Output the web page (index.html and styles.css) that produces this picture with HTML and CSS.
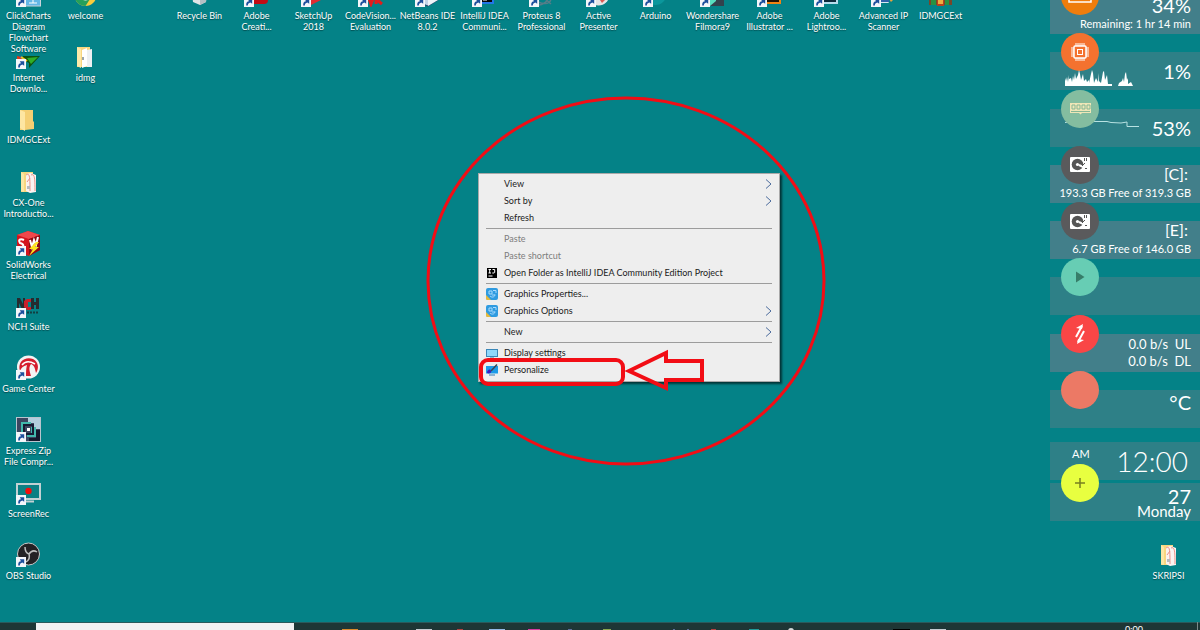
FILE: index.html
```html
<!DOCTYPE html>
<html lang="en">
<head>
    <meta charset="UTF-8">
    <title>Desktop</title>
    <link rel="stylesheet" href="styles.css">
</head>
<body>
    <svg class="defs">
        <symbol id="shortcut" viewBox="0 0 10 10">
            <rect width="10" height="10" fill="#f4f6fa"/>
            <path d="M2.2 8.6C2 5.6 3 4.3 5 4.2L3.8 2.2H8.2V6.8L6.4 5.4C4.6 5.8 3.8 6.8 3.9 8.6Z" fill="#1d4f9c"/>
        </symbol>
        <symbol id="folder" viewBox="0 0 25 25">
            <path d="M4 4H17V15L18 16V23L9 24H4Z" fill="#f5cf73"/>
            <path d="M4 4L9 6V25L4 22Z" fill="#fde6a2"/>
        </symbol>
        <symbol id="folder-docs" viewBox="0 0 25 25">
            <path d="M5 3H17V23H5Z" fill="#f8d67f"/>
            <path d="M10 5L15 4L20 6V23L14 24L10 22Z" fill="#fbf3f1"/>
            <path d="M10 6C14 3 14 9 14 22M15 6C19 4 19 11 19 22M11 13L14 9" fill="none" stroke="#ec8f87" stroke-width="1"/>
            <path d="M11 17H14V20H11Z" fill="#b9b9bd"/>
            <path d="M5 3L8 5V23L5 22Z" fill="#fbe6a5"/>
        </symbol>
        <symbol id="hdd" viewBox="0 0 20 15">
            <rect width="20" height="15" rx="1" fill="#fff"/>
            <circle cx="7.5" cy="7.5" r="5.8" fill="#555"/>
            <circle cx="7.5" cy="7.5" r="1.6" fill="#fff"/>
            <path d="M9 8L13 10L17 4" fill="none" stroke="#fff" stroke-width="2"/>
            <path d="M14.5 1V4M16.5 1V4M15 11.500H17" fill="none" stroke="#555"/>
            <path d="M12 9L15 6" stroke="#555"/>
        </symbol>
        <symbol id="graphics" viewBox="0 0 12 12">
            <rect width="12" height="12" rx="2" fill="#2f9be0"/>
            <path d="M0 7L5 12H1.500Q0 12 0 10.500Z" fill="#e5b93c"/>
            <path d="M3 3H6V6H3ZM7 2.500H10V5M4 8C6 10 9 9 9 6.500M6 7H9" fill="none" stroke="#a9dcff"/>
        </symbol>
        <symbol id="chevron" viewBox="0 0 7 10">
            <path d="M1 0.500L6 5L1 9.500" fill="none" stroke="#4a6a9c"/>
        </symbol>
    </svg>

    <main class="desktop">
        <ul class="icons">
            <!-- left column -->
            <li class="c1 r1"><svg class="icon" viewBox="0 0 25 25"><rect x="4" y="2" width="20.500" height="22" fill="#63b7e6" stroke="#c9d3dc"/><path d="M13 21H21M17 16V21M13 17H21" stroke="#fff" fill="none"/><use href="#shortcut" y="15" width="10" height="10"/></svg>ClickCharts Diagram Flowchart Software</li>
            <li class="c1 r2"><svg class="icon" viewBox="0 0 25 25"><path d="M1 12L11 14L8 20H1Z" fill="#d93a1c"/><path d="M3 12L12 15L9 19Z" fill="#3c4fc4"/><path d="M7 12L24 12L13 24L13 19L7 16Z" fill="#0d520f"/><path d="M11 14L22 13L15 20Z" fill="#2fae27"/><path d="M5 13L11 17" stroke="#f0c419" stroke-width="2"/><use href="#shortcut" y="15" width="10" height="10"/></svg>Internet Downlo...</li>
            <li class="c1 r3"><svg class="icon"><use href="#folder"/></svg>IDMGCExt</li>
            <li class="c1 r4"><svg class="icon"><use href="#folder-docs"/></svg>CX-One Introductio...</li>
            <li class="c1 r5"><svg class="icon" viewBox="0 0 25 25"><path d="M1 4L12 0L24 4V19L13 25L1 21Z" fill="#d3141d"/><path d="M1 4L12 0L24 4L13 8Z" fill="#f0484b"/><path d="M13 8L24 4V19L13 25Z" fill="#8f0a12"/><path d="M8 9C4 7 2 9 4 12C8 13 9 16 4 16" fill="none" stroke="#fff" stroke-width="2"/><path d="M14 9L16 16L18 9L20 14L22 6" fill="none" stroke="#fff" stroke-width="2"/><path d="M20 11L13 18H17L13 25L23 16H19L23 11Z" fill="#ffe51f"/><use href="#shortcut" y="15" width="10" height="10"/></svg>SolidWorks Electrical</li>
            <li class="c1 r6"><svg class="icon" viewBox="0 0 25 25"><path d="M1 16V5H4L7 11V5H9V16H6L3 10V16Z" fill="#262b2f"/><path d="M15 6H11L8 8V14L11 17H15V14H12V9H15Z" fill="#c9202b"/><path d="M15 5H18V9H20V5H23V16H20V12H18V16H15Z" fill="#262b2f"/><path d="M11 19.500H23" stroke="#123f42" stroke-width="2" stroke-dasharray="2 1"/><use href="#shortcut" y="15" width="10" height="10"/></svg>NCH Suite</li>
            <li class="c1 r7"><svg class="icon" viewBox="0 0 25 25"><circle cx="12.500" cy="12" r="11.500" fill="#f3f3f3"/><path d="M4 16C1 7 9 1 17 4C23 7 23 14 20 18C19 13 18 10 15 9C12 13 14 17 15 21L10 21C10 17 10 14 11 10C7 11 5 13 4 16Z" fill="#d51c2c"/><path d="M6 10C9 6 14 6 19 9" fill="none" stroke="#fff" stroke-width="1.500"/><use href="#shortcut" y="15" width="10" height="10"/></svg>Game Center</li>
            <li class="c1 r8"><svg class="icon" viewBox="0 0 25 25"><rect x="0.500" y="0.500" width="24" height="24" fill="#3c4660" stroke="#b8c4ce"/><path d="M12 1H24V12H18V6H12Z" fill="#b2cede"/><path d="M5 5H15V9H9V15H5Z" fill="#42b8ac"/><path d="M15 10H20V20H11V16H15Z" fill="#42b8ac"/><path d="M20 13H24V24H13V21H20Z" fill="#15182c"/><path d="M8 8H17V17H8Z" fill="none" stroke="#171b34" stroke-width="2"/><rect x="11" y="11" width="3" height="3" fill="#fff"/><use href="#shortcut" y="15" width="10" height="10"/></svg>Express Zip File Compr...</li>
            <li class="c1 r9"><svg class="icon" viewBox="0 0 25 25"><rect x="1" y="4" width="23" height="15" fill="#0c8084" stroke="#c3d1d3" stroke-width="2"/><path d="M8 21.500H18" stroke="#c3d1d3" stroke-width="2"/><circle cx="12.500" cy="11" r="3.200" fill="#f50c0c"/><use href="#shortcut" y="15" width="10" height="10"/></svg>ScreenRec</li>
            <li class="c1 r10"><svg class="icon" viewBox="0 0 25 25"><circle cx="12.500" cy="12" r="11" fill="#232124" stroke="#c8c8c8"/><path d="M9 5C9 9 10 11 13 12C15 9 18 8 21 10M13 12C14 15 13 18 10 20" fill="none" stroke="#bdbdbd" stroke-width="1.500"/><use href="#shortcut" y="15" width="10" height="10"/></svg>OBS Studio</li>

            <li class="c2 r1"><svg class="icon" viewBox="0 0 25 25"><circle cx="12.500" cy="13" r="11" fill="#f9cc3c"/><path d="M1.500 13A11 11 0 0 0 12.500 24L17 17L8 12Z" fill="#25a05a"/><path d="M2 10A11 11 0 0 1 23 10Z" fill="#dc4437"/><circle cx="12.500" cy="13" r="5" fill="#4285f4" stroke="#fff"/></svg>welcome</li>
            <li class="c2 r2"><svg class="icon" viewBox="0 0 25 25"><path d="M4 3H17V23H4Z" fill="#f8d67f"/><path d="M9 6L14 4V22L9 24Z" fill="#fff"/><path d="M14 6L19 5V23H14Z" fill="#edf0f2"/><path d="M9 13H11V16H9Z" fill="#9aa4aa"/><path d="M4 3L8 5V24L4 22Z" fill="#fde9aa"/></svg>idmg</li>

            <!-- top row -->
            <li class="c4 r1"><svg class="icon" viewBox="0 0 25 25"><path d="M4 2H21L19 20L13 23L6 20Z" fill="#dfe4e6"/><path d="M13 8L20 6L19 20L13 23Z" fill="#b4bfc4"/></svg>Recycle Bin</li>
            <li class="c5 r1"><svg class="icon" viewBox="0 0 25 25"><rect x="2" y="1" width="22" height="21" rx="4" fill="#c20c14"/><use href="#shortcut" y="15" width="10" height="10"/></svg>Adobe<br>Creati...</li>
            <li class="c6 r1"><svg class="icon" viewBox="0 0 25 25"><path d="M3 3H22V17L10 23V10Z" fill="#df2b30"/><use href="#shortcut" y="15" width="10" height="10"/></svg>SketchUp 2018</li>
            <li class="c7 r1"><svg class="icon" viewBox="0 0 25 25"><path d="M9 12L13 22L17 12M18 22V14H22Q24 17 19 18L24 22" fill="none" stroke="#e31c1c" stroke-width="3"/><use href="#shortcut" y="15" width="10" height="10"/></svg>CodeVision... Evaluation</li>
            <li class="c8 r1"><svg class="icon" viewBox="0 0 25 25"><path d="M3 5L13 1L23 5V18L13 24L3 20Z" fill="#c3d4e7" stroke="#273c68"/><path d="M13 10L23 6V18L13 24Z" fill="#eef3f8"/><use href="#shortcut" y="15" width="10" height="10"/></svg>NetBeans IDE 8.0.2</li>
            <li class="c9 r1"><svg class="icon" viewBox="0 0 25 25"><path d="M3 2H22V22H3Z" fill="#2376e8"/><path d="M5 5H20V20H5Z" fill="#06070b"/><path d="M11 18H15" stroke="#fff"/><use href="#shortcut" y="15" width="10" height="10"/></svg>IntelliJ IDEA Communi...</li>
            <li class="c10 r1"><svg class="icon" viewBox="0 0 25 25"><path d="M8 10L22 22M21 12C24 20 19 24 9 20M9 23C15 23 20 18 23 10" fill="none" stroke="#557d88" stroke-width="1.500"/><use href="#shortcut" y="15" width="10" height="10"/></svg>Proteus 8 Professional</li>
            <li class="c11 r1"><svg class="icon" viewBox="0 0 25 25"><circle cx="12.500" cy="12.500" r="11" fill="#e5e4e5"/><path d="M12 15L20 17L16 21Z" fill="#db5952"/><use href="#shortcut" y="15" width="10" height="10"/></svg>Active Presenter</li>
            <li class="c12 r1"><svg class="icon" viewBox="0 0 25 25"><circle cx="12.500" cy="12" r="11" fill="#0b979c"/><use href="#shortcut" y="15" width="10" height="10"/></svg>Arduino</li>
            <li class="c13 r1"><svg class="icon" viewBox="0 0 25 25"><rect x="1" y="1" width="23" height="23" fill="#33424d"/><path d="M10 18L16 13V19L10 24Z" fill="#58dfc0"/><use href="#shortcut" y="15" width="10" height="10"/></svg>Wondershare Filmora9</li>
            <li class="c14 r1"><svg class="icon" viewBox="0 0 25 25"><rect x="2" y="1" width="21" height="20" fill="#251304" stroke="#f08313" stroke-width="2"/><use href="#shortcut" y="15" width="10" height="10"/></svg>Adobe Illustrator ...</li>
            <li class="c15 r1"><svg class="icon" viewBox="0 0 25 25"><rect x="2" y="1" width="21" height="20" fill="#0d2a3b" stroke="#b5dcec" stroke-width="2"/><use href="#shortcut" y="15" width="10" height="10"/></svg>Adobe Lightroo...</li>
            <li class="c16 r1"><svg class="icon" viewBox="0 0 25 25"><path d="M3 2H23V18H16L18 21H10V18H3Z" fill="#d7e6f3"/><path d="M10 17H18V20H10Z" fill="#2e62a9"/><path d="M18 17L24 16L20 20Z" fill="#e8a33d"/><use href="#shortcut" y="15" width="10" height="10"/></svg>Advanced IP Scanner</li>
            <li class="c17 r1"><svg class="icon" viewBox="0 0 25 25"><rect x="1" y="2" width="23" height="21" fill="#3e8b3a"/><path d="M1 18H24V23H1Z" fill="#78462a"/><path d="M3 18H8V23H3ZM17 18H21V23H17Z" fill="#299242"/><path d="M9 2H16V24H9Z" fill="#b9401f"/><path d="M10 18H15V22H10Z" fill="#efae3f"/></svg>IDMGCExt</li>

            <li class="c21 r10"><svg class="icon"><use href="#folder-docs"/></svg>SKRIPSI</li>
        </ul>

        <div class="menu" role="menu">
            <button class="item" role="menuitem"><span class="glyph"></span>View<svg class="chevron"><use href="#chevron"/></svg></button>
            <button class="item" role="menuitem"><span class="glyph"></span>Sort by<svg class="chevron"><use href="#chevron"/></svg></button>
            <button class="item" role="menuitem"><span class="glyph"></span>Refresh</button>
            <hr>
            <button class="item" role="menuitem" disabled><span class="glyph"></span>Paste</button>
            <button class="item" role="menuitem" disabled><span class="glyph"></span>Paste shortcut</button>
            <button class="item" role="menuitem"><svg class="glyph" viewBox="0 0 12 12"><rect x="1" y="1" width="10" height="10" fill="#000"/><path d="M2.500 2.500H5M3.700 2.500V6M2.500 6H5M6.500 2.500H8.700V5.500Q8.500 6.200 6.300 6M2.500 9H6.500" fill="none" stroke="#fff"/></svg>Open Folder as IntelliJ IDEA Community Edition Project</button>
            <hr>
            <button class="item" role="menuitem"><svg class="glyph"><use href="#graphics"/></svg>Graphics Properties...</button>
            <button class="item" role="menuitem"><svg class="glyph"><use href="#graphics"/></svg>Graphics Options<svg class="chevron"><use href="#chevron"/></svg></button>
            <hr>
            <button class="item" role="menuitem"><span class="glyph"></span>New<svg class="chevron"><use href="#chevron"/></svg></button>
            <hr>
            <button class="item" role="menuitem"><svg class="glyph" viewBox="0 0 12 12"><rect x="0.500" y="2.500" width="11" height="7" fill="#8fd8fb" stroke="#3a87b8"/><path d="M4 11H8" stroke="#3a87b8"/></svg>Display settings</button>
            <button class="item" role="menuitem"><svg class="glyph" viewBox="0 0 12 12"><rect y="2" width="12" height="7.500" fill="#1c9be8"/><path d="M3 11H9" stroke="#2f7db4"/><path d="M1 9C1 6 4 4 5 7C6 9 3 10 1 9Z" fill="#3a1fc0"/><path d="M5 7L11 0.500" stroke="#3b4753" stroke-width="1.500"/></svg>Personalize</button>
        </div>

        <aside class="gadgets">
            <div class="meters">
                <section class="meter slate">
                    <span class="dot orange"><svg width="24" height="18" viewBox="0 0 24 18"><rect x="1" y="1" width="22" height="14" fill="none" stroke="#fff" stroke-width="1.500"/><path d="M4 12H14" stroke="#fff"/></svg></span>
                    <span class="big">34%</span>
                    <span class="small">Remaining: 1 hr 14 min</span>
                </section>
                <section class="meter">
                    <span class="dot coral"><svg width="18" height="18" viewBox="0 0 18 18" fill="none" stroke="#fff"><rect x="3" y="3" width="12" height="12" rx="1" stroke-width="1.500"/><rect x="6.500" y="6.500" width="5" height="5"/><path d="M5 0V3M7 0V3M9 0V3M11 0V3M13 0V3M5 15V18M7 15V18M9 15V18M11 15V18M13 15V18M0 5H3M0 7H3M0 9H3M0 11H3M0 13H3M15 5H18M15 7H18M15 9H18M15 11H18M15 13H18"/></svg></span>
                    <svg class="graph cpu" viewBox="0 0 76 18"><path d="M0 17V9L1 12L2 8L3 13L4 6V10L6 9L7 13L8 7L9 11L10 4L11 10L13 6L14 1L15 5L16 11L18 5L19 12L21 10L22 13L24 11V14L26 5L27 1L28 4L29 14L31 9L33 13L34 4V12L36 14L38 3L39 2L40 11L42 6L43 15H47V17H53L54 14L57 12L58 9L59 13L60 5L61 3L62 11L63 9V15L66 13L68 17Z" fill="#fff"/></svg>
                    <span class="big">1%</span>
                </section>
                <section class="meter">
                    <svg class="graph ram" viewBox="0 0 76 18"><path d="M0 13.500L10 12.500H42L46 13.500L56 14L62 13V17.500H74" fill="none" stroke="#b8e2e2"/></svg>
                    <span class="dot sage"><svg width="23" height="13" viewBox="0 0 23 13"><path d="M1 1H22V11H13L11.500 12.500L10 11H1Z" fill="#efe6b7"/><path d="M3 3H6V7H3ZM8 3H11V7H8ZM13 3H16V7H13ZM18 3H21V7H18ZM2 9.500H21" fill="none" stroke="#85b795"/></svg></span>
                    <span class="big">53%</span>
                </section>
                <section class="meter slate">
                    <span class="dot gray"><svg width="20" height="15"><use href="#hdd"/></svg></span>
                    <span class="drive">[C]:</span>
                    <span class="small">193.3 GB Free of 319.3 GB</span>
                </section>
                <section class="meter slate">
                    <span class="dot gray"><svg width="20" height="15"><use href="#hdd"/></svg></span>
                    <span class="drive">[E]:</span>
                    <span class="small">6.7 GB Free of 146.0 GB</span>
                </section>
                <section class="meter">
                    <button class="dot mint" aria-label="Play"><svg width="10" height="12" viewBox="0 0 10 12"><path d="M1 0.500L9.500 6L1 11.500Z" fill="#377d69"/></svg></button>
                </section>
                <section class="meter slate">
                    <span class="dot red"><svg width="14" height="20" viewBox="0 0 14 20"><path d="M3 13L9 2M11 7L5 18" stroke="#fff" stroke-width="2"/><path d="M3 4L10 0L9 5ZM4 20L5 15L11 16Z" fill="#fff"/></svg></span>
                    <span class="net">0.0 b/s&nbsp; UL</span>
                    <span class="net">0.0 b/s&nbsp; DL</span>
                </section>
                <section class="meter weather">
                    <span class="dot salmon"></span>
                    <span class="big">°C</span>
                </section>
            </div>
            <div class="clock">
                <section class="time"><span class="ampm">AM</span><time>12:00</time></section>
                <section class="meter date">
                    <button class="dot yellow" aria-label="Add"><svg width="12" height="12"><path d="M6 1V11M1 6H11" stroke="#77801f" stroke-width="1.500"/></svg></button>
                    <span class="big">27</span>
                    <span class="day">Monday</span>
                </section>
            </div>
        </aside>

        <!-- hand-drawn marks -->
        <svg class="marks" width="400" height="370" viewBox="426 96 400 370">
            <ellipse cx="626" cy="281" rx="198" ry="183"/>
            <rect x="481" y="360" width="142" height="24" rx="7"/>
            <path d="M629 371L666 353V361H702V380H666V388Z"/>
        </svg>
    </main>

    <footer class="taskbar">
        <input class="search" type="text" aria-label="Search">
        <svg class="apps" width="660" height="8" viewBox="300 0 660 8">
            <path d="M342 7.500H358" stroke="#d98a2b"/>
            <path d="M416 7.500H432M930 7.500H946" stroke="#c3cbd0"/>
            <path d="M457 7.500H463M711 7.500H716" stroke="#b04141"/>
            <path d="M489 7.500H505" stroke="#93b9e6"/>
            <path d="M528 7.500H540" stroke="#d63ba0"/>
            <path d="M568 7.500H572M673 7.500H675M687 7.500H689" stroke="#5c6f9a"/>
            <path d="M603 7.500H611" stroke="#8aa84e"/>
            <path d="M749 7.500H759" stroke="#1f9a98"/>
            <circle cx="791" cy="9" r="3" fill="#d5dada"/>
            <rect x="893" y="7" width="17" height="1" fill="#000"/>
        </svg>
        <time class="tray-time">0:00</time>
    </footer>
</body>
</html>
```
FILE: styles.css
```css
* {
    box-sizing: border-box;
}
body {
    margin: 0;
    height: 100vh;
    display: grid;
    grid-template-rows: 1fr 8px;
    overflow: hidden;
    font-family: Lato, "Open Sans", sans-serif;
    font-size: 9px;
    color: #fff;
    background: #048287;
}
button {
    font: inherit;
    border: 0;
    padding: 0;
}
.defs {
    position: absolute;
    width: 0;
    height: 0;
}
.desktop {
    position: relative;
}

/* desktop icons */
.icons {
    position: absolute;
    top: -18px;
    left: 0;
    height: 100%;
    margin: 0;
    padding: 0;
    list-style: none;
    display: grid;
    grid-template-columns: repeat(21, 57px);
    grid-template-rows: repeat(10, 1fr);
}
.icons li {
    height: 0;
    display: flex;
    flex-direction: column;
    align-items: center;
    text-align: center;
    line-height: 11px;
    text-shadow: 0 1px 1px #02494c;
}
.icon {
    flex: none;
    width: 25px;
    height: 25px;
    margin-bottom: 3px;
}
.c1 { grid-column: 1; }
.c2 { grid-column: 2; }
.c4 { grid-column: 4; }
.c5 { grid-column: 5; }
.c6 { grid-column: 6; }
.c7 { grid-column: 7; }
.c8 { grid-column: 8; }
.c9 { grid-column: 9; }
.c10 { grid-column: 10; }
.c11 { grid-column: 11; }
.c12 { grid-column: 12; }
.c13 { grid-column: 13; }
.c14 { grid-column: 14; }
.c15 { grid-column: 15; }
.c16 { grid-column: 16; }
.c17 { grid-column: 17; }
.c21 { grid-column: 21; }
.r1 { grid-row: 1; }
.r2 { grid-row: 2; }
.r3 { grid-row: 3; }
.r4 { grid-row: 4; }
.r5 { grid-row: 5; }
.r6 { grid-row: 6; }
.r7 { grid-row: 7; }
.r8 { grid-row: 8; }
.r9 { grid-row: 9; }
.r10 { grid-row: 10; }

/* context menu */
.menu {
    position: absolute;
    left: 478px;
    top: 173px;
    width: 302px;
    padding: 1px 7px 3px;
    background: #eee;
    border: 1px solid #a9a9a9;
    box-shadow: 2px 2px 2px rgba(0, 0, 0, 0.6);
}
.item {
    display: flex;
    align-items: center;
    width: 100%;
    height: 17px;
    background: none;
    color: #1b1b1b;
    text-align: left;
}
.item:disabled {
    color: #7d7d7d;
}
.glyph {
    width: 12px;
    height: 12px;
    margin-right: 6px;
}
.chevron {
    width: 7px;
    height: 10px;
    margin-left: auto;
}
.menu hr {
    margin: 2px 0 1px;
    border: 0;
    border-top: 1px solid #9c9c9c;
}

/* gadgets */
.gadgets {
    position: absolute;
    top: -4px;
    right: 0;
    width: 150px;
}
.meters {
    height: 432px;
    display: flex;
    flex-direction: column;
    justify-content: space-between;
}
.meter {
    position: relative;
    height: 38px;
    padding-right: 9px;
    display: flex;
    flex-direction: column;
    align-items: flex-end;
    justify-content: center;
    background: #2e8087;
}
.slate {
    background: #427f8a;
}
.weather {
    justify-content: flex-start;
    padding-top: 3px;
}
.dot {
    position: absolute;
    left: 11px;
    top: -19px;
    width: 38px;
    height: 38px;
    border-radius: 50%;
    display: flex;
    align-items: center;
    justify-content: center;
}
.orange { background: #ef7d0c; }
.coral { background: #f4722f; }
.sage { background: #84bda0; }
.gray { background: #5a5a5c; }
.mint { background: #67cdb4; }
.red { background: #f94646; }
.salmon { background: #ec7965; }
.yellow { background: #e8ff40; }
.graph {
    position: absolute;
    left: 15px;
    width: 76px;
    height: 18px;
}
.cpu { top: 17px; }
.ram { top: 0; }
.big {
    font-size: 20px;
    line-height: 18px;
}
.drive {
    font-size: 16px;
    line-height: 18px;
    padding-right: 3px;
}
.small {
    font-size: 11px;
    line-height: 20px;
}
.net {
    font-size: 13px;
    line-height: 17px;
}
.clock {
    margin-top: 14px;
    display: grid;
    gap: 3px;
}
.time {
    height: 38px;
    display: flex;
    justify-content: space-between;
    padding: 0 12px 0 22px;
    background: #2e8087;
    font-size: 28px;
    font-weight: 300;
    line-height: 38px;
}
.ampm {
    font-size: 11px;
    font-weight: 400;
    line-height: 24px;
}
.day {
    font-size: 15px;
    line-height: 13px;
}

.marks {
    position: absolute;
    left: 426px;
    top: 96px;
    fill: none;
    stroke: #f20d15;
    stroke-width: 4px;
    pointer-events: none;
}
.marks ellipse {
    stroke-width: 3px;
}

/* taskbar */
.taskbar {
    display: flex;
    align-items: flex-start;
    background: #1e3635;
    box-shadow: inset 0 1px #2a5a5b;
    overflow: hidden;
    padding-left: 36px;
}
.search {
    width: 258px;
    height: 28px;
    margin-top: 1px;
    border: 0;
    background: #f1f1f1;
}
.apps {
    margin-left: 6px;
    flex: none;
}
.tray-time {
    margin-left: auto;
    padding: 3px 54px 0 0;
    margin-right: 2px;
    border-right: 1px solid #7d8c8b;
    line-height: 10px;
}
```
